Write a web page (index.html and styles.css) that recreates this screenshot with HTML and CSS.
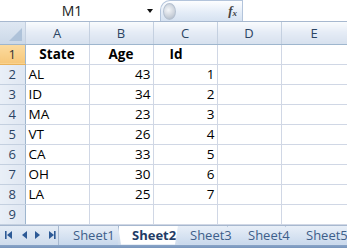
FILE: index.html
```html
<!DOCTYPE html>
<html lang="en">
<head>
  <meta charset="UTF-8" />
  <title>Book1</title>
  <link rel="stylesheet" href="styles.css">
</head>
<body>
  <div class="formula-bar">
    <div class="name-box">M1</div>
    <div class="name-arrow"></div>
    <div class="fx-pill">
      <span class="fx-knob"></span>
      <span class="fx">f<sub>x</sub></span>
    </div>
    <div class="formula-input"></div>
  </div>

  <table class="sheet">
    <colgroup>
      <col class="c-row"><col class="c-col"><col class="c-col"><col class="c-col"><col class="c-col"><col class="c-last">
    </colgroup>
    <thead>
      <tr>
        <th class="corner"><span class="corner-tri"></span></th>
        <th>A</th><th>B</th><th>C</th><th>D</th><th>E</th>
      </tr>
    </thead>
    <tbody>
      <tr>
        <th class="sel">1</th>
        <td class="head">State</td><td class="head">Age</td><td class="head id">Id</td><td></td><td></td>
      </tr>
      <tr><th>2</th><td>AL</td><td class="num">43</td><td class="num">1</td><td></td><td></td></tr>
      <tr><th>3</th><td>ID</td><td class="num">34</td><td class="num">2</td><td></td><td></td></tr>
      <tr><th>4</th><td>MA</td><td class="num">23</td><td class="num">3</td><td></td><td></td></tr>
      <tr><th>5</th><td>VT</td><td class="num">26</td><td class="num">4</td><td></td><td></td></tr>
      <tr><th>6</th><td>CA</td><td class="num">33</td><td class="num">5</td><td></td><td></td></tr>
      <tr><th>7</th><td>OH</td><td class="num">30</td><td class="num">6</td><td></td><td></td></tr>
      <tr><th>8</th><td>LA</td><td class="num">25</td><td class="num">7</td><td></td><td></td></tr>
      <tr><th>9</th><td></td><td></td><td></td><td></td><td></td></tr>
    </tbody>
  </table>

  <div class="tab-bar">
    <div class="tab-nav">
      <svg width="58" height="12" viewBox="0 0 58 12">
        <g fill="#2d5a96">
          <rect x="5" y="2" width="1.6" height="8"/>
          <polygon points="7,6 12,2 12,10"/>
          <polygon points="22,6 27,2 27,10"/>
          <polygon points="35,2 40,6 35,10"/>
          <polygon points="49,2 54,6 49,10"/>
          <rect x="54" y="2" width="1.6" height="8"/>
        </g>
      </svg>
    </div>
    <div class="tabs">
      <div class="tab first">Sheet1</div>
      <div class="tab active">Sheet2</div>
      <div class="tab">Sheet3</div>
      <div class="tab">Sheet4</div>
      <div class="tab">Sheet5</div>
    </div>
  </div>
  <div class="status-strip"></div>
</body>
</html>
```

FILE: styles.css
```css
* {
  margin: 0;
  padding: 0;
  box-sizing: border-box;
}

body {
  width: 347px;
  height: 248px;
  overflow: hidden;
  background: #fff;
  font-family: "Open Sans", Arial, sans-serif;
}

.formula-bar {
  height: 22px;
  display: flex;
  align-items: center;
  border-bottom: 1px solid #a7b8cf;
  background: #fff;
}

.name-box {
  width: 144px;
  text-align: center;
  font-size: 14px;
  color: #222;
}

.name-arrow {
  width: 0;
  height: 0;
  margin: 1px 0 0 3px;
  border-left: 3.5px solid transparent;
  border-right: 3.5px solid transparent;
  border-top: 4px solid #111;
}

.fx-pill {
  margin-left: 7px;
  width: 83px;
  height: 21px;
  display: flex;
  align-items: center;
  justify-content: space-between;
  border: 1px solid #b3c4db;
  border-bottom: none;
  border-radius: 10px 0 0 0;
  background: linear-gradient(#fdfeff, #e3ecf7 60%, #d6e2f1);
  padding: 0 5px 0 2px;
}

.fx-knob {
  width: 13px;
  height: 17px;
  border-radius: 50%;
  background: radial-gradient(circle at 40% 40%, #f4f6f9 0, #c9d0d9 60%, #a7b2c1 100%);
  border: 1px solid #b5c1d1;
}

.fx {
  font-family: "Liberation Serif", serif;
  font-style: italic;
  font-size: 13px;
  color: #444;
  font-weight: bold;
}

.fx sub {
  font-size: 9px;
  vertical-align: -1px;
}

.formula-input {
  flex: 1;
  height: 21px;
}

.sheet {
  border-collapse: collapse;
  table-layout: fixed;
  width: 347px;
  font-size: 13.5px;
  color: #000;
}

.c-row { width: 25px; }
.c-col { width: 64px; }
.c-last { width: 66px; }

.sheet thead th {
  height: 22px;
  font-weight: normal;
  font-size: 13px;
  color: #2b4463;
  background: linear-gradient(#f9fbfd, #e4ebf5 50%, #d7e1ee);
  border-right: 1px solid #c4d0e0;
  border-bottom: 1px solid #9eb6ce;
}

.sheet thead th.corner {
  position: relative;
  background: linear-gradient(#dfe8f3, #cbd8e8);
}

.corner-tri {
  position: absolute;
  right: 3px;
  bottom: 3px;
  width: 0;
  height: 0;
  border-left: 13px solid transparent;
  border-bottom: 13px solid #aec2d9;
}

.sheet tbody th {
  height: 20px;
  font-weight: normal;
  font-size: 13px;
  color: #2b4463;
  background: linear-gradient(90deg, #e9eff7, #dfe7f2);
  border-right: 1px solid #9eb6ce;
  border-bottom: 1px solid #c4d0e0;
}

.sheet tbody th.sel {
  background: linear-gradient(#fbdba0, #f6c77a);
  color: #333;
  border-bottom-color: #e8b35e;
}

.sheet td {
  height: 20px;
  padding: 0 3px;
  border-right: 1px solid #d0d7e5;
  border-bottom: 1px solid #d0d7e5;
  white-space: nowrap;
  line-height: 19px;
}

.sheet td.head {
  font-weight: bold;
  text-align: center;
}

.sheet td.id {
  text-align: left;
  padding-left: 16px;
}

.sheet td.num {
  text-align: right;
  padding-right: 2px;
}

.tab-bar {
  height: 20px;
  display: flex;
  align-items: stretch;
  background: linear-gradient(#e4ecf6, #cfdcec);
  border-top: 1px solid #a7b8cf;
  overflow: hidden;
}

.tab-nav {
  width: 63px;
  display: flex;
  align-items: center;
}

.tabs {
  display: flex;
  align-items: stretch;
}

.tab {
  position: relative;
  flex-shrink: 0;
  width: 67px;
  margin-left: -9px;
  padding-left: 20px;
  font-size: 13px;
  line-height: 19px;
  white-space: nowrap;
  color: #3d5e8a;
  background: linear-gradient(#e8eff8, #c8d8ec);
  clip-path: polygon(0 0, 100% 0, 100% 100%, 10px 100%);
  border-left: 1px solid #8ea7c7;
}

.tab.first {
  width: 60px;
  margin-left: 0;
  padding-left: 14px;
  clip-path: none;
  border-left: 1px solid #a7b8cf;
}

.tab.active {
  z-index: 2;
  width: 60px;
  margin-left: 0;
  padding-left: 13px;
  font-weight: bold;
  color: #1f3c66;
  background: #fff;
  clip-path: polygon(0 0, 100% 0, calc(100% - 3px) 100%, 3px 100%);
}

.status-strip {
  height: 5px;
  background: linear-gradient(#8aa5c8, #6b8ab4);
}
```
